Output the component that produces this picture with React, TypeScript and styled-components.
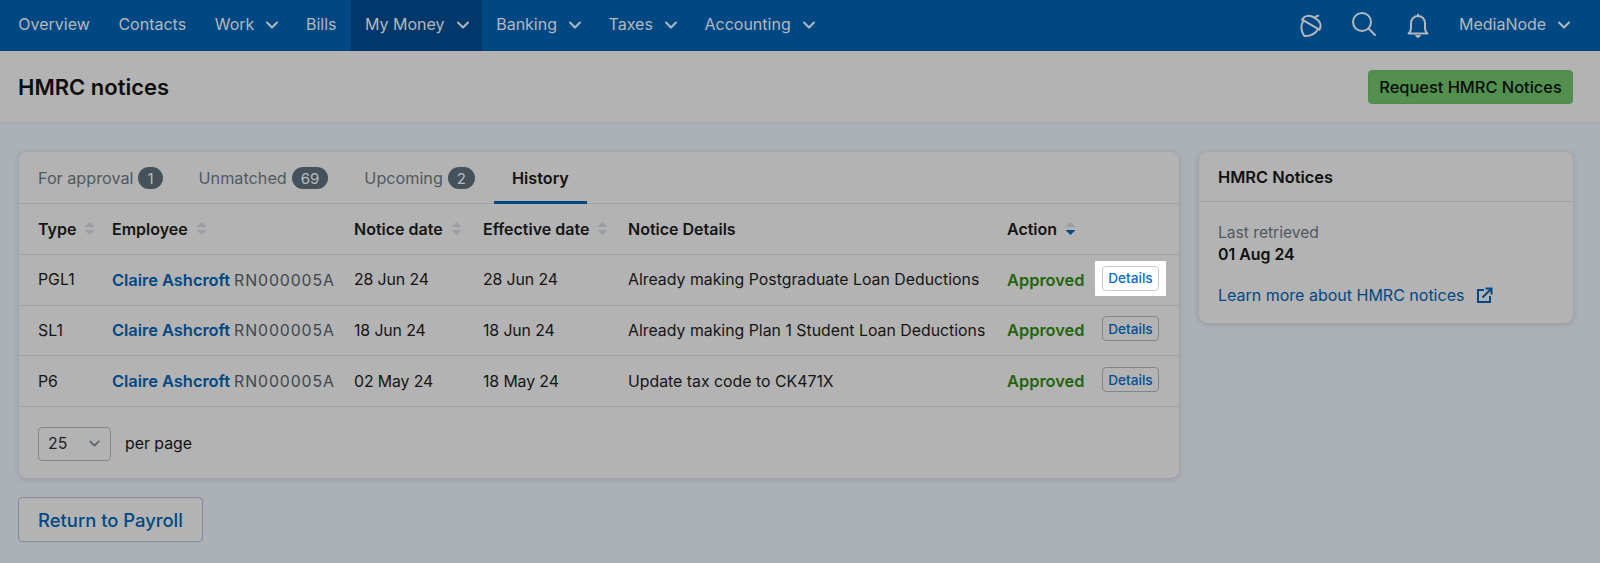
import { ChevronDown } from 'lucide-react'
import styled, { createGlobalStyle } from 'styled-components'

const GlobalStyle = createGlobalStyle`
  html, body {
    margin: 0;
    padding: 0;
    background: #acb0b7;
  }
  body {
    font-family: Inter, 'Open Sans', sans-serif;
    font-size: 15.85px;
    color: #111;
    -webkit-font-smoothing: antialiased;
  }
  * {
    box-sizing: border-box;
  }
`

const Page = styled.div`
  width: 1600px;
  height: 563px;
  overflow: hidden;
  background: #acb0b7;
`

const NavBar = styled.nav`
  height: 51px;
  display: flex;
  align-items: stretch;
  justify-content: space-between;
  padding: 0 16.5px 0 4px;
  background: #004884;
  color: #b4b8bd;
`

const NavGroup = styled.div`
  display: flex;
  align-items: center;
`

const NavItem = styled.div<{ $active?: boolean }>`
  height: 51px;
  display: flex;
  align-items: center;
  padding: 0 14.3px 3px;
  font-size: 16px;
  background: ${props => (props.$active ? '#00386b' : 'transparent')};
  svg {
    margin: 1px -5px 0 8px;
  }
`

const IconSlot = styled.div`
  width: 54px;
  display: flex;
  justify-content: center;
`

const SearchGlyph = styled.svg`
  margin-bottom: 3px;
`

const PageHeader = styled.header`
  height: 73px;
  display: flex;
  align-items: center;
  justify-content: space-between;
  padding: 0 27px 0 18px;
  background: #b3b3b3;
  border-bottom: 2px solid #a7abb1;
`

const Title = styled.h1`
  margin: 0;
  font-size: 22px;
  font-weight: 600;
  color: #0e0e0e;
`

const PrimaryButton = styled.button`
  width: 205px;
  height: 34px;
  padding: 0;
  border: 1px solid #4f8b4f;
  border-radius: 4px;
  background: #53904f;
  color: #0c0c0c;
  font: 500 16.4px Inter, sans-serif;
`

const Main = styled.main`
  display: grid;
  grid-template-columns: 1160px 374px;
  gap: 20px;
  align-items: start;
  padding: 28px 0 0 19px;
`

const Card = styled.section`
  background: #b3b3b3;
  border-radius: 8px;
  box-shadow: 0 1px 5px rgba(80, 85, 95, 0.3);
`

const Tabs = styled.div`
  height: 52px;
  display: flex;
  padding-left: 19px;
  border-bottom: 1px solid #a2a2a2;
`

const Tab = styled.div<{ $active?: boolean }>`
  display: flex;
  align-items: center;
  gap: 5px;
  height: 52px;
  margin-right: ${props => (props.$active ? '0' : '36px')};
  margin-left: ${props => (props.$active ? '-17px' : '0')};
  padding: ${props => (props.$active ? '3px 18px 0' : '0')};
  color: ${props => (props.$active ? '#111' : '#4f5962')};
  font-size: 16.2px;
  font-weight: ${props => (props.$active ? 600 : 400)};
  border-bottom: ${props => (props.$active ? '3px solid #004884' : 'none')};
`

const Count = styled.span`
  height: 22px;
  padding: 0 9px;
  display: inline-flex;
  align-items: center;
  justify-content: center;
  border-radius: 11px;
  background: #45525c;
  color: #b9bcbf;
  font-size: 15px;
`

const Row = styled.div<{ $head?: boolean }>`
  height: 50.75px;
  display: grid;
  grid-template-columns: 74px 242px 129px 145px 379px 96px 1fr;
  align-items: center;
  padding-left: 19px;
  border-bottom: 1px solid #a2a2a2;
  font-weight: ${props => (props.$head ? 600 : 400)};
  font-size: ${props => (props.$head ? '16px' : '15.85px')};
  color: #151515;
  white-space: nowrap;
`

const HeadCell = styled.div`
  display: flex;
  align-items: center;
  gap: 8px;
`

const EmployeeName = styled.a`
  color: #004884;
  font-size: 16.4px;
  font-weight: 600;
`

const EmployeeRef = styled.span`
  color: #3f474e;
  margin-left: 4px;
  letter-spacing: 0.9px;
`

const DateCell = styled.div`
  letter-spacing: -0.1px;
`

const Status = styled.div`
  color: #23650f;
  font-size: 16.4px;
  font-weight: 600;
`

const DetailsWrap = styled.div<{ $highlight?: boolean }>`
  width: 71px;
  height: 35px;
  margin: -3px 0 0 -8px;
  display: flex;
  align-items: center;
  justify-content: center;
  border-radius: 1px;
  background: ${props => (props.$highlight ? '#fff' : 'transparent')};
`

const DetailsButton = styled.button<{ $highlight?: boolean }>`
  width: 57px;
  height: 25px;
  padding: 0;
  border: 1px solid ${props => (props.$highlight ? '#c5c9cf' : '#80868d')};
  border-radius: 4px;
  background: transparent;
  color: ${props => (props.$highlight ? '#0a6ccf' : '#004f92')};
  font: 500 13.6px Inter, sans-serif;
`

const Footer = styled.div`
  height: 71px;
  display: flex;
  align-items: center;
  gap: 14px;
  padding: 2px 0 0 19px;
`

const PageSize = styled.div`
  width: 73px;
  height: 34px;
  display: flex;
  align-items: center;
  justify-content: space-between;
  padding: 0 7px 0 9px;
  border: 1px solid #82878d;
  border-radius: 4px;
  color: #222;
  svg {
    color: #5b6670;
  }
`

const ReturnButton = styled.button`
  display: block;
  width: 185px;
  height: 45px;
  margin: 19px 0 0 18px;
  padding: 0;
  border: 1px solid #858a90;
  border-radius: 4px;
  background: #b3b3b3;
  color: #004884;
  font: 500 18.4px Inter, sans-serif;
`

const SideHeader = styled.div`
  height: 50px;
  display: flex;
  align-items: center;
  padding-left: 19px;
  border-bottom: 1px solid #a2a2a2;
  font-size: 16.4px;
  font-weight: 600;
`

const SideBody = styled.div`
  height: 121px;
  padding: 20px 19px 0;
`

const MutedText = styled.div`
  color: #4f5962;
  font-size: 15.6px;
  line-height: 22px;
`

const DateText = styled.div`
  font-size: 15.9px;
  font-weight: 600;
  line-height: 22px;
`

const LearnLink = styled.a`
  display: flex;
  align-items: center;
  gap: 12px;
  margin-top: 18px;
  color: #004884;
  font-size: 16px;
  line-height: 22px;
`

const Acorn = () => (
  <svg width="26" height="30" viewBox="-1 0 26 30" fill="none" stroke="currentColor" strokeWidth="2" strokeLinecap="round" strokeLinejoin="round">
    <g transform="rotate(30 12 15)">
      <path d="M2 13.500C2 8 6.500 5.500 12 5.500s10 2.500 10 8z" />
      <path d="M3.500 13.500c0 6 3.500 10.500 8.500 13 5-2.500 8.500-7 8.500-13" />
      <path d="M12 5.500c0-1.500.5-2.700 2-3.500" />
    </g>
  </svg>
)

const SearchIcon = () => (
  <SearchGlyph width="24" height="24" viewBox="0 0 24 24" fill="none" stroke="currentColor" strokeWidth="2" strokeLinecap="round">
    <circle cx="10" cy="10" r="9" />
    <path d="M16.500 16.500L23 23" />
  </SearchGlyph>
)

const BellIcon = () => (
  <svg width="22" height="26" viewBox="0 0 22 26" fill="none" stroke="currentColor" strokeWidth="2" strokeLinejoin="round">
    <path d="M1.500 20.500c2-1.500 2.500-3.500 2.500-6V10a7 7 0 0 1 14 0v4.500c0 2.500.5 4.500 2.500 6z" />
    <path d="M11 3V1.500" strokeLinecap="round" />
    <path d="M8.500 22.500c.6 1.200 1.400 1.800 2.500 1.800s1.900-.6 2.500-1.800z" fill="currentColor" strokeWidth="1" />
  </svg>
)

const SortIcon = ({ active }: { active?: boolean }) => (
  <svg width="11" height="15" viewBox="0 0 11 15">
    <path d="M5.500 1l5 5H.5z" fill="#9a9ea3" />
    <path d="M5.500 14l5-5H.5z" fill={active ? '#004884' : '#9a9ea3'} />
  </svg>
)

const ExternalIcon = () => (
  <svg width="17" height="17" viewBox="0 0 17 17" fill="none" stroke="#004884" strokeWidth="2">
    <path d="M8 3H2v12h12V9" />
    <path d="M6.500 10.500L15 2" />
    <path d="M9.500 1.500h6v6" />
  </svg>
)

const navItems = [
  { label: 'Overview' },
  { label: 'Contacts' },
  { label: 'Work', menu: true },
  { label: 'Bills' },
  { label: 'My Money', menu: true, active: true },
  { label: 'Banking', menu: true },
  { label: 'Taxes', menu: true },
  { label: 'Accounting', menu: true },
]

const headers = ['Type', 'Employee', 'Notice date', 'Effective date', 'Notice Details']

const notices = [
  { type: 'PGL1', notice: '28 Jun 24', effective: '28 Jun 24', details: 'Already making Postgraduate Loan Deductions', highlight: true },
  { type: 'SL1', notice: '18 Jun 24', effective: '18 Jun 24', details: 'Already making Plan 1 Student Loan Deductions' },
  { type: 'P6', notice: '02 May 24', effective: '18 May 24', details: 'Update tax code to CK471X' },
]

export default function App() {
  return (
    <Page>
      <GlobalStyle />
      <NavBar>
        <NavGroup>
          {navItems.map(item => (
            <NavItem key={item.label} $active={item.active}>
              {item.label}
              {item.menu && <ChevronDown size={20} strokeWidth={2.4} />}
            </NavItem>
          ))}
        </NavGroup>
        <NavGroup>
          <IconSlot>
            <Acorn />
          </IconSlot>
          <IconSlot>
            <SearchIcon />
          </IconSlot>
          <IconSlot>
            <BellIcon />
          </IconSlot>
          <NavItem>
            MediaNode
            <ChevronDown size={20} strokeWidth={2.4} />
          </NavItem>
        </NavGroup>
      </NavBar>
      <PageHeader>
        <Title>HMRC notices</Title>
        <PrimaryButton>Request HMRC Notices</PrimaryButton>
      </PageHeader>
      <Main>
        <Card>
          <Tabs>
            <Tab>
              For approval <Count>1</Count>
            </Tab>
            <Tab>
              Unmatched <Count>69</Count>
            </Tab>
            <Tab>
              Upcoming <Count>2</Count>
            </Tab>
            <Tab $active>History</Tab>
          </Tabs>
          <Row $head>
            {headers.map(label => (
              <HeadCell key={label}>
                {label}
                {label !== 'Notice Details' && <SortIcon />}
              </HeadCell>
            ))}
            <HeadCell>
              Action <SortIcon active />
            </HeadCell>
          </Row>
          {notices.map(notice => (
            <Row key={notice.type}>
              <div>{notice.type}</div>
              <div>
                <EmployeeName>Claire Ashcroft</EmployeeName>
                <EmployeeRef>RN000005A</EmployeeRef>
              </div>
              <DateCell>{notice.notice}</DateCell>
              <DateCell>{notice.effective}</DateCell>
              <div>{notice.details}</div>
              <Status>Approved</Status>
              <DetailsWrap $highlight={notice.highlight}>
                <DetailsButton $highlight={notice.highlight}>Details</DetailsButton>
              </DetailsWrap>
            </Row>
          ))}
          <Footer>
            <PageSize>
              25
              <ChevronDown size={17} strokeWidth={2.6} />
            </PageSize>
            per page
          </Footer>
        </Card>
        <Card>
          <SideHeader>HMRC Notices</SideHeader>
          <SideBody>
            <MutedText>Last retrieved</MutedText>
            <DateText>01 Aug 24</DateText>
            <LearnLink>
              Learn more about HMRC notices
              <ExternalIcon />
            </LearnLink>
          </SideBody>
        </Card>
      </Main>
      <ReturnButton>Return to Payroll</ReturnButton>
    </Page>
  )
}
